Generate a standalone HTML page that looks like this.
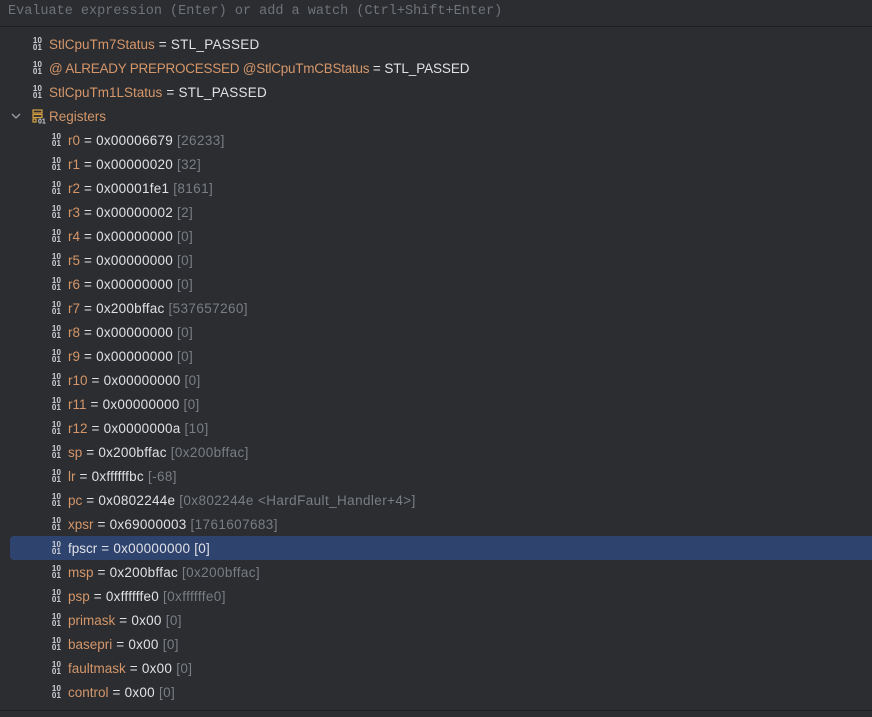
<!DOCTYPE html>
<html><head><style>
body{margin:0;width:872px;height:717px;background:#2b2d30;overflow:hidden;font-family:"Liberation Sans",sans-serif;font-size:13.5px;position:relative}
.top{position:absolute;left:0;top:0;width:872px;height:26px;border-bottom:1px solid #1e1f22;background:#2b2d30;}
.top span{position:absolute;left:8px;top:4px;font-family:"Liberation Mono",monospace;font-size:13.5px;color:#6f737a}
.row{position:absolute;left:0;width:872px;height:24px;line-height:25px;white-space:nowrap}
.sel{background:#2e436e;left:10px;width:862px;border-radius:4px 0 0 4px}
.ic{position:absolute;top:5px;width:13px;font-size:8px;line-height:7px;font-weight:bold;color:#ced0d6;text-align:center;letter-spacing:0.2px}
.t{position:absolute;top:0}
.n{color:#d5966a}.v{color:#dfe1e5;letter-spacing:0.25px}.g{color:#7a7e85;letter-spacing:0.4px}
.bot{position:absolute;left:0;top:710px;width:872px;height:1px;background:#1e1f22}
</style></head><body>
<div class="top"><span>Evaluate expression (Enter) or add a watch (Ctrl+Shift+Enter)</span></div>
<div class="row" style="top:32px"><div class="ic" style="left:31px">10<br>01</div><div class="t" style="left:49px"><span class="n">StlCpuTm7Status</span><span class="v"> = STL_PASSED</span></div></div>
<div class="row" style="top:56px"><div class="ic" style="left:31px">10<br>01</div><div class="t" style="left:49px"><span class="n" style="letter-spacing:-0.25px">@ ALREADY PREPROCESSED @StlCpuTmCBStatus</span><span class="v" style="letter-spacing:-0.1px"> = STL_PASSED</span></div></div>
<div class="row" style="top:80px"><div class="ic" style="left:31px">10<br>01</div><div class="t" style="left:49px"><span class="n">StlCpuTm1LStatus</span><span class="v"> = STL_PASSED</span></div></div>
<div class="row" style="top:104px">
<svg style="position:absolute;left:11px;top:8px" width="10" height="8"><path d="M1 2 L5 6 L9 2" stroke="#9da0a8" stroke-width="1.3" fill="none"/></svg>
<svg style="position:absolute;left:32px;top:5px" width="16" height="15"><rect x="1" y="1" width="9" height="3" fill="none" stroke="#d9a343" stroke-width="1.2"/><rect x="1" y="5.5" width="9" height="3" fill="none" stroke="#d9a343" stroke-width="1.2"/><rect x="1" y="10" width="3" height="3" fill="none" stroke="#d9a343" stroke-width="1.2"/><text x="6" y="14.5" font-size="7" font-weight="bold" fill="#ced0d6" font-family="Liberation Sans">01</text></svg>
<div class="t" style="left:49px"><span class="n">Registers</span></div></div>
<div id="regs"></div>
<div class="bot"></div>
<script>
var r=[["r0","0x00006679","[26233]"],["r1","0x00000020","[32]"],["r2","0x00001fe1","[8161]"],["r3","0x00000002","[2]"],["r4","0x00000000","[0]"],["r5","0x00000000","[0]"],["r6","0x00000000","[0]"],["r7","0x200bffac","[537657260]"],["r8","0x00000000","[0]"],["r9","0x00000000","[0]"],["r10","0x00000000","[0]"],["r11","0x00000000","[0]"],["r12","0x0000000a","[10]"],["sp","0x200bffac","[0x200bffac]"],["lr","0xffffffbc","[-68]"],["pc","0x0802244e","[0x802244e &lt;HardFault_Handler+4&gt;]"],["xpsr","0x69000003","[1761607683]"],["fpscr","0x00000000","[0]"],["msp","0x200bffac","[0x200bffac]"],["psp","0xffffffe0","[0xffffffe0]"],["primask","0x00","[0]"],["basepri","0x00","[0]"],["faultmask","0x00","[0]"],["control","0x00","[0]"]];
var h="";r.forEach(function(x,i){var s=x[0]=="fpscr";h+='<div class="row'+(s?' sel':'')+'" style="top:'+(128+i*24)+'px"><div class="ic" style="left:'+(s?40:50)+'px">10<br>01</div><div class="t" style="left:'+(s?58:68)+'px"><span class="n"'+(s?' style="color:#dfe1e5"':'')+'>'+x[0]+'</span><span class="v"> = '+x[1]+' </span><span class="'+(s?'v':'g')+'">'+x[2]+'</span></div></div>';});
document.getElementById("regs").innerHTML=h;
</script>
</body></html>
